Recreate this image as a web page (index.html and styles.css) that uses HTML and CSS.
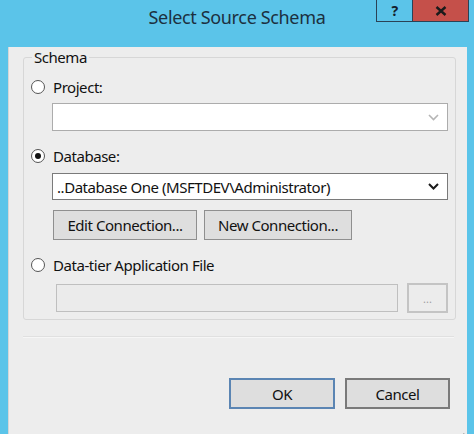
FILE: index.html
```html
<!DOCTYPE html>
<html lang="en">
  <head>
    <meta charset="UTF-8" />
    <meta name="viewport" content="width=device-width, initial-scale=1.0" />
    <title>Select Source Schema</title>
    <link rel="stylesheet" href="styles.css">
  </head>
  <body>
    <div class="window">
      <div class="titlebar">
        <span></span>
        <span class="title">Select Source Schema</span>
        <div class="caption-buttons">
          <span class="caption-help">?</span>
          <span class="caption-close">
            <svg width="12" height="10" viewBox="0 0 12 10">
              <path d="M1.5 1 L10.5 9 M10.5 1 L1.5 9" stroke="#1b1b1b" stroke-width="2.4" />
            </svg>
          </span>
        </div>
      </div>

      <div class="client">
        <fieldset class="schema">
          <legend>Schema</legend>

          <div class="option">
            <span class="radio"></span>
            <span>Project:</span>
          </div>
          <div class="combo disabled">
            <span class="combo-text"></span>
            <svg class="chevron" width="11" height="7" viewBox="0 0 11 7">
              <path d="M1 1 L5.5 5.5 L10 1" fill="none" stroke="#b5b5b5" stroke-width="1.6" />
            </svg>
          </div>

          <div class="option">
            <span class="radio checked"></span>
            <span>Database:</span>
          </div>
          <div class="combo">
            <span class="combo-text">..Database One (MSFTDEV\Administrator)</span>
            <svg class="chevron" width="11" height="7" viewBox="0 0 11 7">
              <path d="M1 1 L5.5 5.5 L10 1" fill="none" stroke="#1b1b1b" stroke-width="2" />
            </svg>
          </div>
          <div class="connection-buttons">
            <button class="btn edit">Edit Connection...</button>
            <button class="btn new">New Connection...</button>
          </div>

          <div class="option">
            <span class="radio"></span>
            <span>Data-tier Application File</span>
          </div>
          <div class="file-row">
            <div class="file-box"></div>
            <button class="btn browse" disabled>...</button>
          </div>
        </fieldset>

        <div class="separator"></div>

        <div class="dialog-buttons">
          <button class="btn ok">OK</button>
          <button class="btn cancel">Cancel</button>
        </div>

        <!-- resize grip dots -->
        <svg class="grip" width="10" height="10" viewBox="0 0 10 10">
          <rect x="8" y="2" width="1.5" height="1.5" fill="#b8b8b8" />
          <rect x="5" y="5" width="1.5" height="1.5" fill="#b8b8b8" />
          <rect x="8" y="5" width="1.5" height="1.5" fill="#b8b8b8" />
          <rect x="2" y="8" width="1.5" height="1.5" fill="#b8b8b8" />
          <rect x="5" y="8" width="1.5" height="1.5" fill="#b8b8b8" />
          <rect x="8" y="8" width="1.5" height="1.5" fill="#b8b8b8" />
        </svg>
      </div>
    </div>
  </body>
</html>
```

FILE: styles.css
```css
body {
  margin: 0;
  background-color: #5bc4e9;
  font-family: "Noto Sans", "Open Sans", sans-serif;
  font-size: 15px;
  letter-spacing: -0.45px;
  color: #111;
}

.window {
  width: 474px;
  height: 434px;
}

.titlebar {
  display: grid;
  grid-template-columns: 1fr auto 1fr;
  height: 32px;
}

.title {
  font-size: 18px;
  letter-spacing: -0.35px;
  line-height: 34px;
  color: #1c3040;
}

.caption-buttons {
  justify-self: end;
  align-self: start;
  display: flex;
  margin-right: 5px;
  border: 1px solid #2a4256;
  border-top: none;
}

.caption-help {
  width: 35px;
  height: 21px;
  text-align: center;
  font-weight: bold;
  font-size: 14px;
  line-height: 21px;
  color: #13202c;
  border-right: 1px solid #2a4256;
}

.caption-close {
  width: 55px;
  height: 21px;
  background-color: #c5504a;
  display: flex;
  align-items: center;
  justify-content: center;
}

.client {
  position: relative;
  box-sizing: border-box;
  height: 396px;
  margin: 0 7px 0 8px;
  padding: 0 13px 0 14px;
  background-color: #ededed;
  border-left: 1px solid #d6d6d6;
}

.schema {
  margin: 15px 0 0 0;
  padding: 0 7px 6px 7px;
  border: 1px solid #d7d7d7;
  border-radius: 3px;
}

.schema legend {
  margin-left: 1px;
  padding: 0 2px;
  line-height: 20px;
}

.option {
  display: flex;
  align-items: center;
  height: 20px;
  margin-top: 15px;
}

.schema legend + .option {
  margin-top: 10px;
}

.radio {
  box-sizing: border-box;
  width: 14px;
  height: 14px;
  margin-right: 8px;
  border: 1px solid #555;
  border-radius: 50%;
  background-color: #fff;
  display: flex;
  align-items: center;
  justify-content: center;
}

.radio.checked::after {
  content: "";
  width: 6px;
  height: 6px;
  border-radius: 50%;
  background-color: #111;
}

.combo {
  box-sizing: border-box;
  display: flex;
  align-items: center;
  height: 27px;
  margin: 7px 0 0 21px;
  padding: 0 8px 0 4px;
  background-color: #fff;
  border: 1px solid #7a7a7a;
}

.combo.disabled {
  height: 28px;
  margin-top: 6px;
  border-color: #acacac;
}

.combo-text {
  flex: 1;
  white-space: nowrap;
}

.btn {
  box-sizing: border-box;
  font-family: inherit;
  font-size: 15px;
  letter-spacing: -0.45px;
  color: #111;
  background-color: #dedede;
  border: 1px solid #8f8f8f;
  padding: 0;
}

.connection-buttons {
  display: flex;
  gap: 7px;
  margin: 10px 0 0 22px;
}

.edit {
  width: 144px;
  height: 30px;
}

.new {
  width: 148px;
  height: 30px;
}

.file-row {
  display: flex;
  align-items: center;
  gap: 9px;
  margin: 8px 0 0 25px;
}

.file-box {
  box-sizing: border-box;
  width: 342px;
  height: 28px;
  background-color: #ebebeb;
  border: 1px solid #bfbfbf;
}

.browse {
  width: 41px;
  height: 30px;
  font-size: 11px;
  letter-spacing: 0;
  color: #a0a0a0;
  background-color: #ececec;
  border: 2px solid #c4c4c4;
}

.separator {
  margin-top: 16px;
  height: 1px;
  background-color: #e0e0e0;
  border-bottom: 1px solid #f6f6f6;
}

.dialog-buttons {
  display: flex;
  justify-content: flex-end;
  gap: 10px;
  margin: 40px 4px 0 0;
}

.ok,
.cancel {
  width: 106px;
  height: 31px;
}

.ok {
  border: 2px solid #5b85b3;
}

.cancel {
  width: 105px;
  border: 2px solid #7a7a7a;
}

.grip {
  position: absolute;
  right: 2px;
  bottom: 2px;
}
```
